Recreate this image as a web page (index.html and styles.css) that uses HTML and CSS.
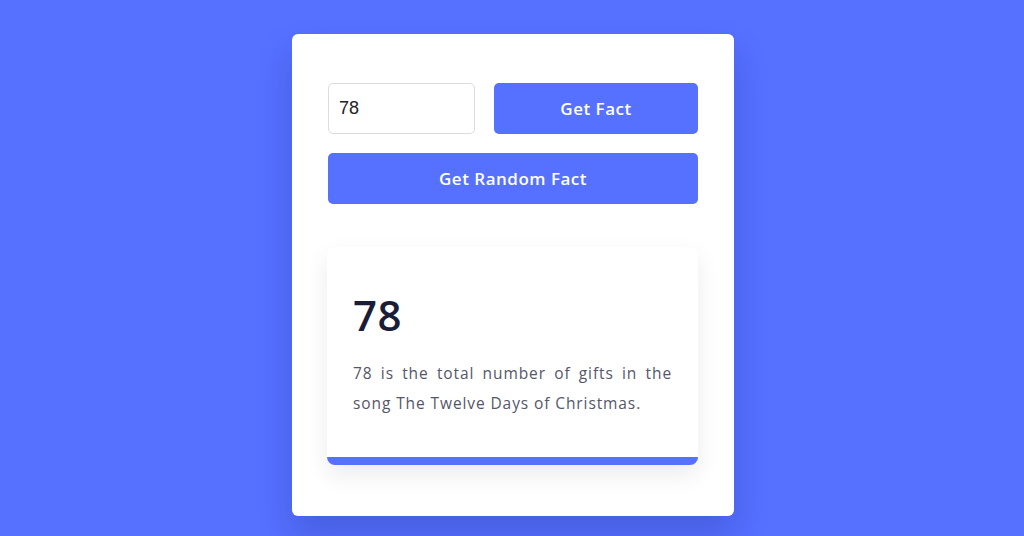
FILE: index.html
```html
<!DOCTYPE html>
<html>
<head>
<meta charset="utf-8">
<link rel="stylesheet" href="styles.css">
</head>
<body>
<div class="container">
  <div class="controls">
    <input class="num-input" type="number" value="78">
    <button class="btn btn-fact">Get Fact</button>
  </div>
  <button class="btn btn-random">Get Random Fact</button>
  <div class="fact-card">
    <h2 class="fact-num">78</h2>
    <p class="fact-text">78 is the total number of gifts in the song The Twelve Days of Christmas.</p>
  </div>
</div>
</body>
</html>
```
FILE: styles.css
```css
* { box-sizing: border-box; margin: 0; padding: 0; }
html, body { height: 100%; }
body {
  background: #5670ff;
  font-family: "Open Sans", "DejaVu Sans", sans-serif;
  display: flex;
  justify-content: center;
  padding: 34px 0 0 2px;
  overflow: hidden;
}
.container {
  width: 442px;
  height: 482px;
  background: #ffffff;
  border-radius: 6px;
  padding: 49px 36px 0 36px;
  box-shadow: 0 20px 35px rgba(20, 30, 120, 0.22);
}
.controls {
  display: flex;
  gap: 19px;
  margin-bottom: 19px;
}
.num-input {
  width: 147px;
  height: 51px;
  border: 1px solid #dcdcdc;
  border-radius: 5px;
  padding: 0 10px;
  font-family: "Liberation Sans", Arial, sans-serif;
  font-size: 18px;
  color: #222;
  outline: none;
  -moz-appearance: textfield;
}
.num-input::-webkit-outer-spin-button,
.num-input::-webkit-inner-spin-button { -webkit-appearance: none; margin: 0; }
.btn {
  height: 51px;
  background: #5670ff;
  color: #ffffff;
  border: none;
  border-radius: 5px;
  font-family: "Open Sans", "DejaVu Sans", sans-serif;
  font-weight: 600;
  font-size: 17px;
  letter-spacing: 0.5px;
}
.btn-fact { flex: 1; }
.btn-random { width: 100%; display: block; }
.fact-card {
  margin-top: 43px;
  width: 371px;
  height: 218px;
  margin-left: -1px;
  background: #ffffff;
  border-radius: 8px;
  border-bottom: 8px solid #5670ff;
  box-shadow: 0 10px 25px rgba(0, 0, 40, 0.08);
  padding: 43px 26px 0 26px;
}
.fact-num {
  font-size: 42px;
  font-weight: 600;
  color: #1b1c38;
  line-height: 50px;
  letter-spacing: 0.5px;
}
.fact-text {
  margin-top: 18px;
  font-size: 15.5px;
  font-weight: 400;
  line-height: 30px;
  color: #55566a;
  text-align: justify;
  letter-spacing: 0.9px;
}
```
